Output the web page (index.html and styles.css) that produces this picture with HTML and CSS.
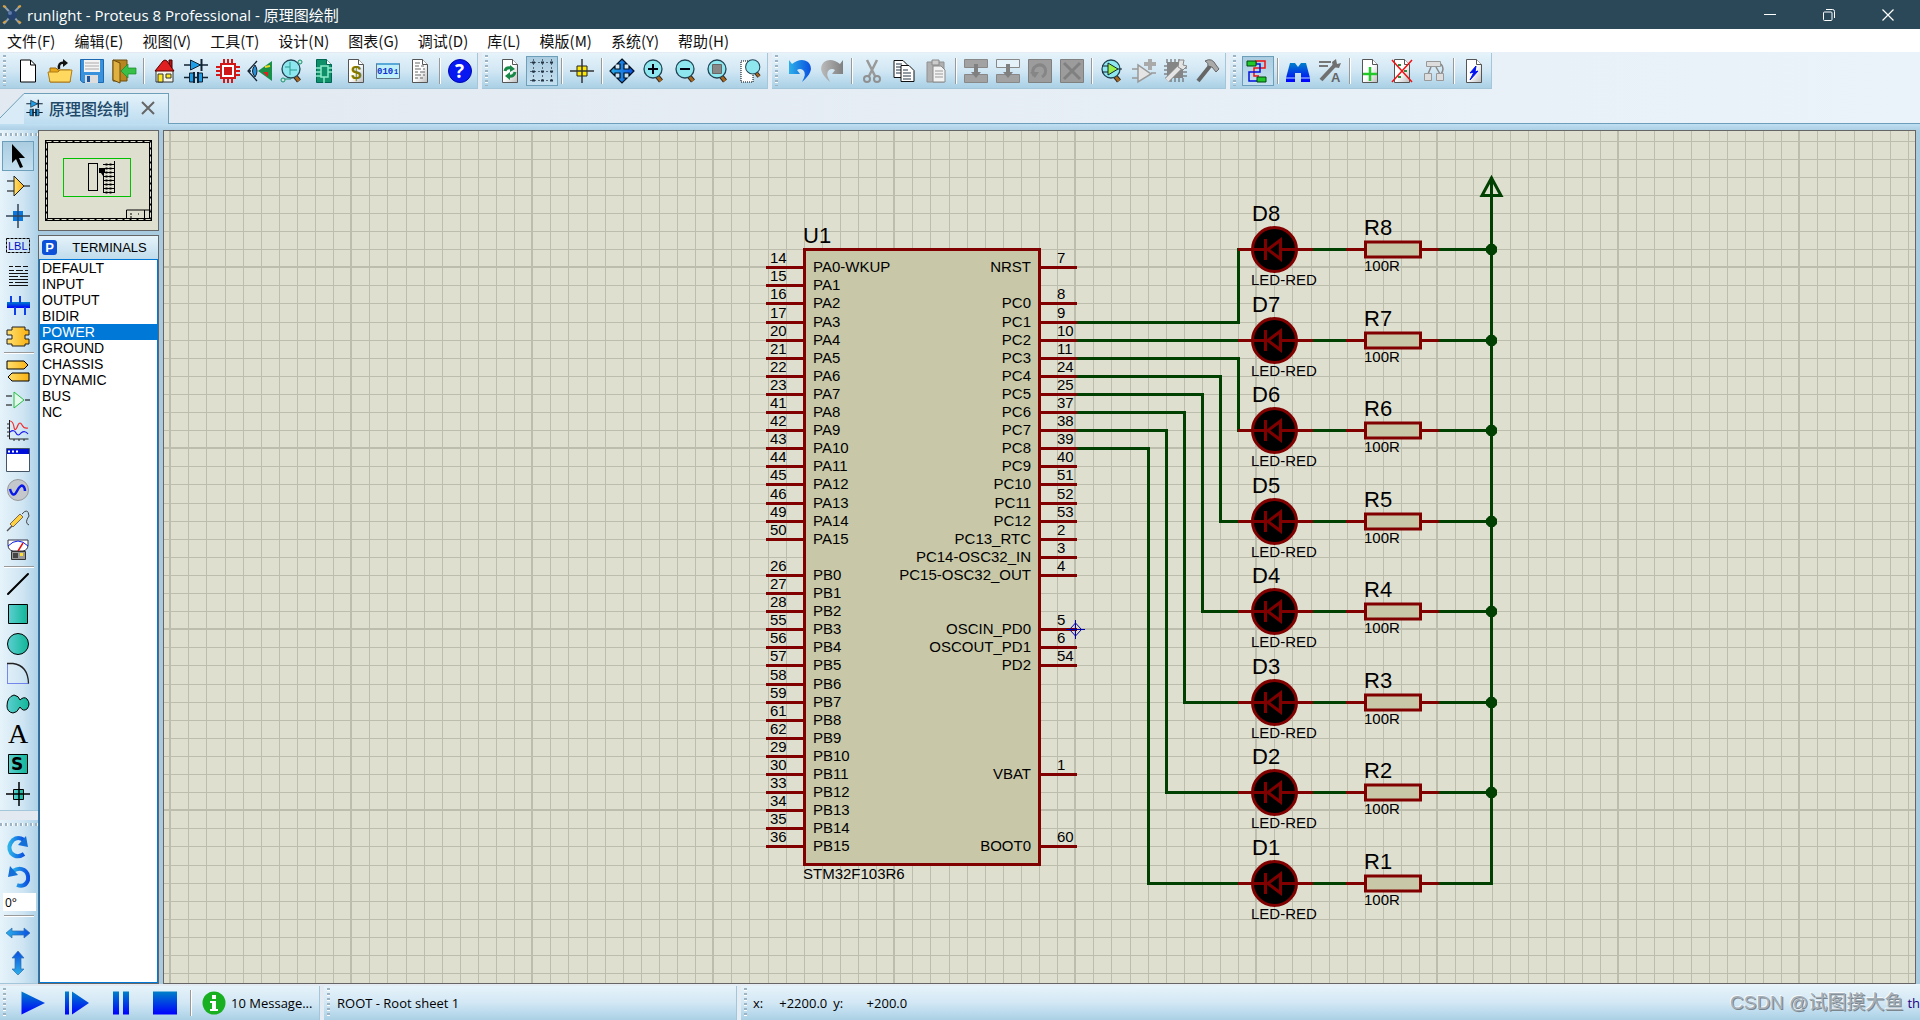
FILE: index.html
```html
<!DOCTYPE html>
<html lang="zh-CN">
<head>
    <meta charset="UTF-8">
    <meta name="viewport" content="width=device-width, initial-scale=1.0">
    <title>runlight - Proteus 8 Professional - 原理图绘制</title>
    <link rel="stylesheet" href="styles.css">
</head>
<body>
    <!-- 公用渐变和图形 -->
    <svg class="defs" width="0" height="0" aria-hidden="true">
        <defs>
            <linearGradient id="gTeal"><stop offset="0" stop-color="#5ccfd0"/><stop offset="1" stop-color="#10b698"/></linearGradient>
            <linearGradient id="gBlue" x1="0" y1="0" x2="0" y2="1"><stop offset="0" stop-color="#0080c8"/><stop offset="1" stop-color="#0000ff"/></linearGradient>
            <linearGradient id="gSky"><stop offset="0" stop-color="#2cb0e8"/><stop offset="1" stop-color="#0a4fe0"/></linearGradient>
            <linearGradient id="gSkyV" x1="0" y1="0" x2="0" y2="1"><stop offset="0" stop-color="#0a4fe0"/><stop offset="1" stop-color="#2cb0e8"/></linearGradient>
            <linearGradient id="gGold"><stop offset="0" stop-color="#ffe070"/><stop offset="1" stop-color="#f8b010"/></linearGradient>
            <linearGradient id="gPage" x1="0" y1="0" x2="1" y2="1"><stop offset="0.5" stop-color="#fff"/><stop offset="1" stop-color="#bbb"/></linearGradient>
            <linearGradient id="gGray"><stop offset="0" stop-color="#bbb"/><stop offset="1" stop-color="#808080"/></linearGradient>
            <symbol id="page" viewBox="0 0 24 24">
                <path d="M4.500 .5h10l5 5v18h-15z" fill="url(#gPage)" stroke="#555"/>
                <path d="M14.500 .5v5h5" fill="#fff" stroke="#555"/>
            </symbol>
            <symbol id="lens" viewBox="0 0 24 24">
                <path d="M15 17l4 5" stroke="#222" stroke-width="5"/>
                <path d="M15 17l4 5" stroke="#a8651c" stroke-width="3"/>
                <circle cx="11" cy="10" r="9" fill="#8ee6ee" stroke="#245" stroke-width="1.300"/>
            </symbol>
            <symbol id="schem" viewBox="0 0 24 24">
                <path d="M0 6h24M0 18.500h24" stroke="#123" stroke-width="1.500"/>
                <path d="M6.500 1v10l10-5z" fill="#1f9ee8" stroke="#123"/>
                <path d="M17.500 0v12" stroke="#123" stroke-width="2"/>
                <path d="M5.500 14h4v9h-4zM14.500 14h4v9h-4z" fill="#1f9ee8" stroke="#123"/>
                <path d="M10 13v11M14 13v11" stroke="#123" stroke-width="2"/>
            </symbol>
        </defs>
    </svg>

    <header class="title-bar">
        <svg class="app-logo" viewBox="0 0 20 20">
            <path d="M2 1Q10 9 18 19M18 1Q10 9 2 19" fill="none" stroke="#8fa0b0" stroke-width="2"/>
            <path d="M1 1l3 1M19 1l-3 1M1 18l3-2M19 18l-3-2" stroke="#d8a040" stroke-width="2"/>
            <circle cx="10" cy="10" r="5" fill="#26436f"/>
            <circle cx="8" cy="8" r="2" fill="#5f7ba8"/>
        </svg>
        <h1>runlight - Proteus 8 Professional - 原理图绘制</h1>
        <div class="window-buttons">
            <button title="最小化"><svg viewBox="0 0 12 12"><path d="M0 5.500h12" stroke="#fff"/></svg></button>
            <button title="还原"><svg viewBox="0 0 12 12"><rect x=".5" y="3" width="8.500" height="8.500" rx="1" fill="none" stroke="#fff"/><path d="M3 .5h6.500q2 0 2 2V9" fill="none" stroke="#fff"/></svg></button>
            <button title="关闭"><svg viewBox="0 0 12 12"><path d="M.5.5l11 11M11.500.5l-11 11" stroke="#fff" stroke-width="1.200"/></svg></button>
        </div>
    </header>

    <nav class="menu-bar">
        <button>文件(F)</button>
        <button>编辑(E)</button>
        <button>视图(V)</button>
        <button>工具(T)</button>
        <button>设计(N)</button>
        <button>图表(G)</button>
        <button>调试(D)</button>
        <button>库(L)</button>
        <button>模版(M)</button>
        <button>系统(Y)</button>
        <button>帮助(H)</button>
    </nav>

    <div class="toolbars">
        <div class="toolbar">
            <button title="新建"><svg viewBox="0 0 24 24"><path d="M4.500 1h10l5 5v17h-15z" fill="#fff" stroke="#000"/><path d="M14.500 1v5h5" fill="none" stroke="#000"/></svg></button>
            <button title="打开"><svg viewBox="0 0 24 24"><path d="M2 23V9h6l2 2h12v12z" fill="#e8a818" stroke="#9a6a10"/><path d="M0 13h10l2-2h12l-2 12H2z" fill="#ffd860" stroke="#b07c18"/><path d="M11 10q-1-7 5-6" fill="none" stroke="#111" stroke-width="2.500"/><path d="M15 0l5 4-5 4z" fill="#111"/></svg></button>
            <button title="保存"><svg viewBox="0 0 24 24"><path d="M.5.500h23v23H3l-2.500-2z" fill="#3a92dc" stroke="#1c68b0"/><path d="M4 1h16v12H4z" fill="#f4f4f4"/><path d="M5 4h14M5 7h14M5 10h14" stroke="#aaa"/><path d="M5 16h13v8H5z" fill="#ddd"/><path d="M7 17h3v6H7z" fill="#1c58a0"/></svg></button>
            <button title="关闭项目"><svg viewBox="0 0 24 24"><path d="M1 1h14v21H1z" fill="#b88620" stroke="#6c4c0c"/><path d="M1 1l7 3v20l-7-3z" fill="#e0b040" stroke="#6c4c0c"/><path d="M24 9h-8V5l-7 7 7 7v-4h8z" fill="#38c048" stroke="#168828" stroke-width=".7"/></svg></button>
            <span class="sep"></span>
            <button title="主页"><svg viewBox="0 0 24 24"><path d="M17 1h3v8h-3z" fill="#b01818" stroke="#400"/><path d="M4 11h17v12H4z" fill="#f4f4e8" stroke="#333"/><path d="M3 12L11 2q2-2 4 0l7 10z" fill="#e02020" stroke="#500"/><path d="M6 15h5v8H6z" fill="#ffe820" stroke="#333"/><path d="M14 15h5v4h-5z" fill="#ffe820" stroke="#333"/></svg></button>
            <button title="原理图"><svg viewBox="0 0 24 24"><use href="#schem" x="0" width="24" height="24"/></svg></button>
            <button title="PCB"><svg viewBox="0 0 24 24"><path d="M8 0v24M12 0v24M16 0v24M0 8h24M0 12h24M0 16h24" stroke="#d01818" stroke-width="2"/><path d="M5 5h14v14H5z" fill="#fff" stroke="#d01818" stroke-width="2"/><path d="M8 8h8v8H8z" fill="#d01818"/></svg></button>
            <button title="3D 查看"><svg viewBox="0 0 24 24"><path d="M9 2L0 12l9 10M0 12h3" fill="none" stroke="#123" stroke-width="1.300"/><path d="M7 6q-5 6 0 12 4-6 0-12" fill="#2a90d8" stroke="#123"/><path d="M24 2v20L10 12z" fill="#189048"/><path d="M15 13h5v5z" fill="#e02020"/><path d="M17 8l5-1" stroke="#f0d820" stroke-width="2"/></svg></button>
            <button title="Gerber"><svg viewBox="0 0 24 24"><use href="#lens" width="24" height="24"/><path d="M5 8h5V3M10 8v8M10 11h7" fill="none" stroke="#28a090"/><path d="M2 20h9" stroke="#189070"/><circle cx="3" cy="21" r="2" fill="#c8eadc" stroke="#189070"/><circle cx="20" cy="3" r="2" fill="#c8eadc" stroke="#189070"/></svg></button>
            <button title="设计浏览器"><svg viewBox="0 0 24 24"><path d="M4.500.5h10l5 5v18h-15z" fill="#109068" stroke="#065"/><path d="M14.500.500v5h5" fill="#fff" stroke="#065"/><path d="M9 7h7v11H9zM4 9h5M4 13h5M4 17h5M16 9h4M16 13h4M12 18v6" fill="none" stroke="#8ce8c8" stroke-width="1.500"/></svg></button>
            <button title="物料清单"><svg viewBox="0 0 24 24"><use href="#page" width="24" height="24"/><text x="7" y="20" class="t-dollar">$</text></svg></button>
            <button title="源代码"><svg viewBox="0 0 24 24"><path d="M.500 4.500h23v15H.5z" fill="#bff0fa" stroke="#678"/><path d="M1 5h22" stroke="#58a8d8" stroke-width="2"/><text x="1" y="15" class="t-code">010</text><text x="18" y="15" class="t-code-sm">1</text></svg></button>
            <button title="工程笔记"><svg viewBox="0 0 24 24"><use href="#page" width="24" height="24"/><path d="M7 4h5M7 7h4m2 0h3M7 10h6m2 0h2M7 13h3m2 0h5M7 16h6m2 0h2M7 19h3m2 0h3" stroke="#666"/></svg></button>
            <span class="sep"></span>
            <button title="帮助"><svg viewBox="0 0 24 24"><circle cx="12" cy="12" r="11.500" fill="#0818f0" stroke="#0008b0"/><text x="7" y="19" class="t-help">?</text></svg></button>
        </div>

        <div class="toolbar">
            <button title="刷新"><svg viewBox="0 0 24 24"><use href="#page" width="24" height="24"/><path d="M7 12q1-4 6-3M17 13q-1 5-6 4" fill="none" stroke="#188848" stroke-width="3"/><path d="M12 6l5 4-5 3zM12 13v8l-5-4z" fill="#188848"/></svg></button>
            <button class="active" title="网格"><svg viewBox="0 0 24 24"><path d="M0 3.500h24M0 12.500h24M0 21.500h24M3.500 0v24M12.500 0v24M21.500 0v24" stroke="#567" stroke-dasharray="2 2"/><path d="M2 3.500h3M11 3.500h3M20 3.500h3M2 12.500h3M11 12.500h3M20 12.500h3M2 21.500h3M11 21.500h3M20 21.500h3" stroke="#234" stroke-width="2"/></svg></button>
            <span class="sep"></span>
            <button title="原点"><svg viewBox="0 0 24 24"><path d="M7 7h10v10H7z" fill="#ffe800" stroke="#222"/><path d="M12 0v24M0 12h24" stroke="#333" stroke-width="1.500"/></svg></button>
            <span class="sep"></span>
            <button title="平移"><svg viewBox="0 0 24 24"><path d="M12 0l5 5h-3v5h5V7l5 5-5 5v-3h-5v5h3l-5 5-5-5h3v-5H5v3l-5-5 5-5v3h5V5H7z" fill="url(#gSky)" stroke="#012" stroke-width="1.200"/></svg></button>
            <button title="放大"><svg viewBox="0 0 24 24"><use href="#lens" width="24" height="24"/><path d="M6 10h10M11 5v10" stroke="#001" stroke-width="2"/></svg></button>
            <button title="缩小"><svg viewBox="0 0 24 24"><use href="#lens" width="24" height="24"/><path d="M6 10h10" stroke="#001" stroke-width="2"/></svg></button>
            <button title="全部显示"><svg viewBox="0 0 24 24"><use href="#lens" width="24" height="24"/><path d="M6.500 5.500h9v9h-9z" fill="#888" stroke="#666"/></svg></button>
            <button title="区域缩放"><svg viewBox="0 0 24 24"><path d="M3 2h12v21H3z" fill="#fff" stroke="#000" stroke-dasharray="1 1"/><use href="#lens" x="6" width="19" height="19"/></svg></button>
        </div>

        <div class="toolbar">
            <button title="撤销"><svg viewBox="0 0 24 24"><path d="M1 1l3 4Q13-2 20 3q8 8-6 20 5-9 1-12-3-2-6 0l3 4H1z" fill="url(#gSky)"/></svg></button>
            <button title="重做"><svg viewBox="0 0 24 24"><path d="M23 1l-3 4Q11-2 4 3q-8 8 6 20Q5 14 9 11q3-2 6 0l-3 4h11z" fill="url(#gGray)"/></svg></button>
            <span class="sep"></span>
            <button title="剪切"><svg viewBox="0 0 24 24"><path d="M7 1l8 16M17 1L9 17" stroke="#999" stroke-width="2.500"/><circle cx="7" cy="20" r="3" fill="none" stroke="#909090" stroke-width="2"/><circle cx="17" cy="20" r="3" fill="none" stroke="#909090" stroke-width="2"/></svg></button>
            <button title="复制"><svg viewBox="0 0 24 24"><path d="M2 1.500h9l4 4v13H2z" fill="#fff" stroke="#111"/><path d="M4 5h6M4 8h5M4 11h5M4 14h5" stroke="#234"/><path d="M9 6.500h8l5 5v11H9z" fill="#fff" stroke="#111"/><path d="M11 11h5M11 14h8M11 17h8M11 20h8" stroke="#234"/></svg></button>
            <button title="粘贴"><svg viewBox="0 0 24 24"><path d="M3 3h17v20H3z" fill="#b0b0b0" stroke="#909090"/><path d="M8 1h7v5H8z" fill="#ccc" stroke="#888"/><path d="M9 7h8l4 4v12H9z" fill="#f2f2f2" stroke="#888"/><path d="M11 12h8M11 15h8M11 18h8" stroke="#999"/></svg></button>
            <span class="sep"></span>
            <button title="块复制"><svg viewBox="0 0 24 24"><path d="M.5.500h23v8H.5zM.5 15.500h23v8H.5z" fill="#a2a2a2" stroke="#888"/><path d="M10 5h4v8h3l-5 6-5-6h3z" fill="#808080"/></svg></button>
            <button title="块移动"><svg viewBox="0 0 24 24"><path d="M.5.500h23v8H.5z" fill="#e5f1f8" stroke="#888"/><path d="M.5 15.500h23v8H.5z" fill="#a2a2a2" stroke="#888"/><path d="M10 5h4v8h3l-5 6-5-6h3z" fill="#808080"/></svg></button>
            <button title="块旋转"><svg viewBox="0 0 24 24"><path d="M.5.500h23v23H.5z" fill="#9c9c9c" stroke="#808080"/><path d="M6 17q-3-7 2-10 6-3 9 2 2 6-3 9" fill="none" stroke="#868686" stroke-width="3"/><path d="M2 13h9l-4 6z" fill="#868686"/></svg></button>
            <button title="块删除"><svg viewBox="0 0 24 24"><path d="M.5.500h23v23H.5z" fill="#9c9c9c" stroke="#808080"/><path d="M4 4l16 16M20 4L4 20" stroke="#808080" stroke-width="3"/></svg></button>
            <span class="sep"></span>
            <button title="拾取元件"><svg viewBox="0 0 24 24"><use href="#lens" width="24" height="24"/><path d="M2 7h7M2 13h7" stroke="#123"/><path d="M8 4v12l10-6z" fill="#98f048" stroke="#123"/><path d="M18 10h4" stroke="#123"/></svg></button>
            <button title="制作元件"><svg viewBox="0 0 24 24"><path d="M6 6v17l13-8zM0 10h6M0 19h6M19 14h5" fill="#e4e4e4" stroke="#999" stroke-width="1.500"/><path d="M18 0v11M12 5h12" stroke="#aaa" stroke-width="4"/></svg></button>
            <button title="封装工具"><svg viewBox="0 0 24 24"><path d="M3 0v4M7 0v4M11 0v4M15 0v4M7 19v4M11 19v4M15 19v4M19 19v4M0 7h4M0 11h4M0 15h4M19 9h4M19 13h4M19 17h4" stroke="#555"/><path d="M3 3h16v16H3z" fill="#858585"/><path d="M3 21L17 7" stroke="#888" stroke-width="6"/><path d="M3 21L17 7" stroke="#e4e4e4" stroke-width="4"/><path d="M15 1l-1 7 5 3 4-4-4-1 1-5z" fill="#e4e4e4" stroke="#888"/></svg></button>
            <button title="分解"><svg viewBox="0 0 24 24"><path d="M2 22L14 7" stroke="#666" stroke-width="4"/><path d="M9 2q7-4 11 4l3 4-3 3-4-5-4-1q1-3-3-5z" fill="#aaa" stroke="#666"/></svg></button>
        </div>

        <div class="toolbar">
            <button class="active" title="自动连线"><svg viewBox="0 0 24 24"><path d="M10 5V2h9v7H8v8h5" fill="none" stroke="#f01010" stroke-width="1.500"/><path d="M10 5h4v8H3v9h9" fill="none" stroke="#0010e0" stroke-width="1.500"/><path d="M1 2h9v5H1zM11 18h9v5h-9z" fill="#20c828" stroke="#041"/></svg></button>
            <span class="sep"></span>
            <button title="查找"><svg viewBox="0 0 24 24"><path d="M4 4h5l3 4 3-4h5l4 15v4h-9v-9H9v9H0v-4z" fill="url(#gBlue)"/><path d="M0 19h9M15 19h9" stroke="#bdf" stroke-width="1"/></svg></button>
            <button title="属性分配"><svg viewBox="0 0 24 24"><path d="M1 3h12M1 7h9" stroke="#777" stroke-width="2"/><path d="M3 21L17 6" stroke="#707070" stroke-width="4"/><path d="M15 8l-1-5 4-3 1 5 4-1-2 5z" fill="#707070"/><text x="13" y="23" class="t-prop">A</text></svg></button>
            <span class="sep"></span>
            <button title="新建图纸"><svg viewBox="0 0 24 24"><use href="#page" width="24" height="24"/><path d="M12 8v14M5 15h14" stroke="#20c828" stroke-width="2.500"/></svg></button>
            <button title="删除图纸"><svg viewBox="0 0 24 24"><use href="#page" width="24" height="24"/><path d="M8 6h3M8 18h3M14 12h3" stroke="#384" stroke-width="2"/><path d="M2 1l20 22M22 1L2 23" stroke="#f01010" stroke-width="1.500"/></svg></button>
            <button title="退出子图"><svg viewBox="0 0 24 24"><path d="M9 8L6 15M14 8l4 7M19 5q4 5 0 10" fill="none" stroke="#888" stroke-width="1.500"/><path d="M4.500 2.500h14v5h-14zM2.500 14.500h7v7h-7zM14.500 14.500h7v7h-7z" fill="#ddd" stroke="#999"/></svg></button>
            <span class="sep"></span>
            <button title="电气规则检查"><svg viewBox="0 0 24 24"><use href="#page" width="24" height="24"/><path d="M14 7l-6 7 4-1-4 8 8-9-3 1z" fill="#0010f0" stroke="#0010f0"/></svg></button>
        </div>
    </div>

    <div class="tab-strip">
        <div class="tab">
            <svg class="tab-edge" viewBox="0 0 24 31"><path d="M0 25L24 .5V31H0z" fill="#d9ebf6"/><path d="M0 25L24 .5" stroke="#6d9fba" fill="none"/></svg>
            <div class="tab-body">
                <svg class="tab-icon" viewBox="0 0 20 24"><use href="#schem" width="20" height="24"/></svg>
                <span class="tab-name">原理图绘制</span>
                <button class="tab-close" title="关闭"><svg viewBox="0 0 14 14"><path d="M1 1l12 12M13 1L1 13" stroke="#666" stroke-width="2"/></svg></button>
            </div>
        </div>
    </div>

    <main class="workspace">
        <aside class="modes">
            <div class="mode-bar">
                <button class="active" title="选择"><svg viewBox="0 0 24 24"><path d="M6 0v19l4-4 4 9 3-1-4-9h6z" fill="#000"/></svg></button>
                <button title="元件"><svg viewBox="0 0 24 24"><path d="M1 7h7M1 17h7M18 12h6" stroke="#000"/><path d="M8 2v20l10-10z" fill="url(#gGold)" stroke="#222"/></svg></button>
                <button title="节点"><svg viewBox="0 0 24 24"><path d="M7 7h10v10H7z" fill="#0878e0"/><path d="M12 0v24M0 12h24" stroke="#345" stroke-width="1.500"/></svg></button>
                <button title="标号"><svg viewBox="0 0 24 24"><path d="M.5 4.500h23v14H.5z" fill="none" stroke="#000" stroke-dasharray="3 1"/><text x="2" y="16" class="t-lbl">LBL</text></svg></button>
                <button title="文本脚本"><svg viewBox="0 0 24 24"><path d="M3 2.500h4m2 0h6m2 0h5M3 6.500h5m2 0h7m2 0h3M3 9.500h19M3 12.500h9m2 0h8M3 15.500h19M3 18.500h4m2 0h13M3 21.500h19" stroke="#111"/></svg></button>
                <button title="总线"><svg viewBox="0 0 24 24"><path d="M1 8h23v6H1z" fill="url(#gBlue)"/><path d="M5 2v7M14 2v7M9 13v8M19 13v8" stroke="#1040e8" stroke-width="2"/></svg></button>
                <button title="子电路"><svg viewBox="0 0 24 24"><path d="M6 3h13v3h4v5h-4v4h4v5h-4v2H6v-2H1v-5h5v-4H1V6h5z" fill="url(#gGold)" stroke="#222"/></svg></button>
                <span class="rule"></span>
                <button title="终端"><svg viewBox="0 0 24 24"><path d="M1 3h17l4 4-4 4H1zM23 15H6l-4 4 4 4h17z" fill="url(#gGold)" stroke="#000"/></svg></button>
                <button title="器件引脚"><svg viewBox="0 0 24 24"><path d="M0 8h6M0 17h6M19 12h5" stroke="#000"/><path d="M8 4v16l10-8z" fill="#e4f8ec" stroke="#20c040"/></svg></button>
                <button title="图表"><svg viewBox="0 0 24 24"><path d="M3.500 2v19h19M3 6H1M3 10H1M3 14H1M3 18H1M8 21v2M13 21v2M18 21v2" fill="none" stroke="#222"/><path d="M4 3q3 0 4 6t4-2q2-4 4 0t6 3" fill="none" stroke="#f03030" stroke-width="1.200"/><path d="M4 14q4-3 6 1t5 0q4-3 7 1" fill="none" stroke="#1818f0" stroke-width="1.200"/></svg></button>
                <button title="激活弹出"><svg viewBox="0 0 24 24"><path d="M.5.500h23v23H.5z" fill="#fff" stroke="#456"/><path d="M1 1h22v5H1z" fill="#0010d8"/><path d="M2 3.500h2m2 0h2m2 0h2" stroke="#fff" stroke-width="2"/></svg></button>
                <button title="信号源"><svg viewBox="0 0 24 24"><circle cx="12" cy="12" r="10.500" fill="#c4c8cc" stroke="#999"/><path d="M4 11q3 10 7 2t7-4q1 2 1 4" fill="none" stroke="#0818e8" stroke-width="2.500"/></svg></button>
                <button title="探针"><svg viewBox="0 0 24 24"><path d="M1 23l6-6" stroke="#555" stroke-width="1.500"/><path d="M4 16l10-10 3 3L7 19z" fill="#ffd040" stroke="#765"/><path d="M16 6q6-7 7 2-5 7 0 9" fill="none" stroke="#444"/></svg></button>
                <button title="虚拟仪器"><svg viewBox="0 0 24 24"><path d="M2 2h20v5q0 5-5 6H7q-5-1-5-6z" fill="#fff" stroke="#334"/><path d="M2 8q10-10 20 0" fill="none" stroke="#1020e0"/><path d="M12 13l5-8" stroke="#e01010" stroke-width="1.500"/><path d="M5.500 13.500h14v8h-14z" fill="#999" stroke="#333"/><path d="M7 15h5v5H7z" fill="#444"/><path d="M14 15h3v3h-3z" fill="#ffe030"/></svg></button>
                <span class="rule"></span>
                <button title="直线"><svg viewBox="0 0 24 24"><path d="M2 22L22 2" stroke="#000" stroke-width="2" stroke-linecap="round"/></svg></button>
                <button title="方框"><svg viewBox="0 0 24 24"><path d="M2.500 2.500h19v19h-19z" fill="url(#gTeal)" stroke="#000"/></svg></button>
                <button title="圆形"><svg viewBox="0 0 24 24"><circle cx="12" cy="12" r="10.500" fill="url(#gTeal)" stroke="#000"/></svg></button>
                <button title="圆弧"><svg viewBox="0 0 24 24"><path d="M1.500 1.500v20h21" fill="none" stroke="#1020e0" stroke-dasharray="1 1"/><path d="M1 1.500h6q15 2 15.500 20" fill="none" stroke="#222" stroke-width="1.300"/></svg></button>
                <button title="闭合路径"><svg viewBox="0 0 24 24"><path d="M8 3q5 1 6 5 4-4 7-1 4 5 0 10-4 3-7-2-3 6-7 6-6-1-6-7Q1 5 8 3z" fill="url(#gTeal)" stroke="#000"/></svg></button>
                <button title="文本"><svg viewBox="0 0 24 24"><text x="2" y="21" class="t-serif">A</text></svg></button>
                <button title="符号"><svg viewBox="0 0 24 24"><path d="M2.500 2.500h19v19h-19z" fill="url(#gTeal)" stroke="#000"/><text x="5" y="18" class="t-sym">S</text></svg></button>
                <button title="标记"><svg viewBox="0 0 24 24"><path d="M7.500 7.500h10v10h-10z" fill="url(#gTeal)" stroke="#000"/><path d="M13 0v24M0 12h24" stroke="#000" stroke-width="1.500"/></svg></button>
            </div>
            <div class="mode-bar rotate-bar">
                <button title="顺时针旋转"><svg viewBox="0 0 24 24"><path d="M18 19Q11 24 5 18 1 11 7 5q5-4 11 0" fill="none" stroke="url(#gSky)" stroke-width="4"/><path d="M20 1l2 11-10-2z" fill="#1470d8"/></svg></button>
                <button title="逆时针旋转"><svg viewBox="0 0 24 24"><path d="M11 20q8 3 11-5 1-7-4-10-5-3-11 1" fill="none" stroke="url(#gSky)" stroke-width="4"/><path d="M4 1L2 12l10-2z" fill="#1470d8"/></svg></button>
                <input class="angle" type="text" value="0°" aria-label="旋转角度">
                <span class="rule"></span>
                <button title="水平翻转"><svg viewBox="0 0 24 24"><path d="M0 12l6-5v3h12V7l6 5-6 5v-3H6v3z" fill="url(#gSky)" stroke="#3070b0" stroke-width=".7"/></svg></button>
                <button title="垂直翻转"><svg viewBox="0 0 24 24"><path d="M12 0l6 7h-3v11h3l-6 6-6-6h3V7H6z" fill="url(#gSkyV)" stroke="#3070b0" stroke-width=".7"/></svg></button>
            </div>
        </aside>

        <section class="side-panel">
            <div class="overview">
                <svg viewBox="0 0 119 99">
                    <rect x="7.500" y="10.500" width="104" height="78" fill="none" stroke="#000" stroke-width="3"/>
                    <rect x="7.500" y="10.500" width="104" height="78" fill="none" stroke="#dfdfcf" stroke-dasharray="5 2"/>
                    <path d="M87.500 88v-9h24M105.500 79v9M91 83h2M91 86h2M99 83h1" fill="none" stroke="#000"/>
                    <rect x="24.500" y="27.500" width="67" height="38" fill="none" stroke="#00c000"/>
                    <rect x="49.500" y="32.500" width="9" height="27" fill="none" stroke="#000"/>
                    <path d="M60 37h6v5h-6zM62 42h3v19h-1V45z"/>
                    <path d="M64 33.500h12M64 37.500h12M64 41.500h12M64 45.500h12M64 49.500h12M64 53.500h12M64 57.500h12M64 61.500h12M75.500 30v32" stroke="#000"/>
                    <path d="M67.500 32.500v30M71.500 32.500v30" stroke="#000" stroke-width="2" stroke-dasharray="2 2"/>
                </svg>
            </div>
            <div class="picker">
                <div class="picker-header">
                    <button class="pick-btn" title="拾取">P</button>
                    <h2>TERMINALS</h2>
                </div>
                <ul class="picker-list">
                    <li>DEFAULT</li>
                    <li>INPUT</li>
                    <li>OUTPUT</li>
                    <li>BIDIR</li>
                    <li class="selected">POWER</li>
                    <li>GROUND</li>
                    <li>CHASSIS</li>
                    <li>DYNAMIC</li>
                    <li>BUS</li>
                    <li>NC</li>
                </ul>
            </div>
        </section>

        <section class="sheet">
            <svg id="schematic">
                <defs>
                    <pattern id="grid" x="5" y="135" width="181" height="181" patternUnits="userSpaceOnUse">
                        <path class="grid-minor" d="M19.500 0v181M37.500 0v181M56.500 0v181M74.500 0v181M92.500 0v181M110.500 0v181M128.500 0v181M146.500 0v181M164.500 0v181M0 19.500h181M0 37.500h181M0 56.500h181M0 74.500h181M0 92.500h181M0 110.500h181M0 128.500h181M0 146.500h181M0 164.500h181"/>
                        <path class="grid-major" d="M1 0v181M0 1h181"/>
                    </pattern>
                </defs>
                <rect width="100%" height="100%" fill="url(#grid)"/>
                <g id="parts"></g>
            </svg>
        </section>
    </main>

    <footer class="status-bar">
        <div class="status-panel sim">
            <button title="运行"><svg viewBox="0 0 24 24"><path d="M.5.500v23L24 12z" fill="url(#gBlue)"/></svg></button>
            <button title="单步"><svg viewBox="0 0 24 24"><path d="M0 .5h4v23H0zM7 .500v23L24 12z" fill="url(#gBlue)"/></svg></button>
            <button title="暂停"><svg viewBox="0 0 24 24"><path d="M4 .5h6v23H4zM14 .5h6v23h-6z" fill="url(#gBlue)"/></svg></button>
            <button title="停止"><svg viewBox="0 0 24 24"><path d="M0 .5h24v23H0z" fill="url(#gBlue)"/></svg></button>
            <span class="sep"></span>
            <svg class="info" viewBox="0 0 24 24"><circle cx="12" cy="12" r="11.500" fill="#18b020"/><path d="M10 4h4v4h-4zM8 10h6v8h2v2H8v-2h2v-6H8z" fill="#fff"/></svg>
            <span class="messages">10 Message...</span>
        </div>
        <div class="status-panel root">ROOT - Root sheet 1</div>
        <div class="status-panel coords">
            <span>x:</span><span class="value">+2200.0</span>
            <span class="axis">y:</span><span class="value">+200.0</span>
            <span class="watermark">CSDN @试图摸大鱼</span>
            <span class="unit">th</span>
        </div>
    </footer>

    <script src="schematic.js"></script>
</body>
</html>
```

FILE: styles.css
```css
:root {
    --title: #2a4858;
    --line: #6d9fba;
    --panel-top: #e6f3fa;
    --panel-bottom: #abd0e4;
    --sheet: #dfdfcf;
    --pin: #800000;
    --wire: #004000;
    --body: #c8c8a8;
    --ui: "Open Sans", "Noto Sans CJK SC", sans-serif;
    --arial: "Liberation Sans", Arial, sans-serif;
}

* {
    box-sizing: border-box;
}

body {
    margin: 0;
    height: 100vh;
    display: flex;
    flex-direction: column;
    overflow: hidden;
    font-family: var(--ui);
    font-size: 13px;
    background: linear-gradient(90deg, #e2e9f0, #eaf2fa);
}

button {
    padding: 0;
    border: 0;
    background: none;
    font: inherit;
    color: inherit;
    display: flex;
    align-items: center;
    justify-content: center;
}

button svg {
    overflow: visible;
}

.defs {
    position: absolute;
}

/* 标题栏 */
.title-bar {
    flex: none;
    height: 29px;
    display: flex;
    align-items: center;
    background: var(--title);
    color: #fff;
}

.app-logo {
    width: 20px;
    height: 20px;
    margin: 0 5px 0 2px;
}

.title-bar h1 {
    margin: 0;
    font-size: 15px;
    font-weight: 400;
}

.window-buttons {
    display: flex;
    margin-left: auto;
    margin-right: 3px;
}

.window-buttons button {
    width: 59px;
    height: 29px;
}

.window-buttons svg {
    width: 12px;
    height: 12px;
}

/* 菜单 */
.menu-bar {
    flex: none;
    height: 23px;
    display: flex;
    gap: 19px;
    padding-left: 7px;
    background: #fff;
    font-size: 15px;
    font-family: "Noto Sans CJK SC", sans-serif;
    line-height: 25px;
    color: #111;
}

/* 工具栏 */
.toolbars {
    flex: none;
    display: flex;
    gap: 4px;
    padding-top: 1px;
}

.toolbar {
    position: relative;
    height: 36px;
    display: flex;
    align-items: center;
    padding: 0 1px 0 12px;
    border-bottom: 1px solid #a4c6da;
    border-right: 1px solid #a4c6da;
    background: linear-gradient(var(--panel-top), #d2e7f4 50%, #bddcee 75%, var(--panel-bottom));
}

.toolbar::before,
.status-panel::before {
    content: "";
    position: absolute;
    left: 3px;
    top: 2px;
    bottom: 2px;
    width: 3px;
    background: repeating-linear-gradient(#9fb4c2 0 2px, #fff 2px 3px, transparent 3px 5px);
}

.toolbar button {
    width: 32px;
    height: 30px;
}

.toolbar svg,
.mode-bar svg {
    width: 24px;
    height: 24px;
}

.toolbar .active,
.mode-bar .active {
    border: 1px solid var(--line);
    background: linear-gradient(#abcce0, #c4e0f0);
}

.sep {
    width: 2px;
    height: 26px;
    margin: 0 3px;
    border-left: 1px solid #999;
    border-right: 1px solid #fff;
}

/* 页签 */
.tab-strip {
    flex: none;
    height: 35px;
    padding-top: 4px;
    border-bottom: 1px solid var(--line);
}

.tab {
    display: flex;
    width: 169px;
    height: 31px;
}

.tab-edge {
    flex: none;
    width: 24px;
    height: 31px;
}

.tab-body {
    flex: 1;
    display: flex;
    align-items: center;
    padding-bottom: 3px;
    border-top: 1px solid var(--line);
    border-right: 1px solid var(--line);
    background: linear-gradient(#e4f2fa, #bcdcf0);
    color: #204868;
    font-size: 16px;
    font-weight: 700;
}

.tab-icon {
    width: 17px;
    height: 20px;
    margin: 0 6px 0 2px;
}

.tab-name {
    font-weight: 500;
}

.tab-close {
    margin-left: auto;
    margin-right: 13px;
}

.tab-close svg {
    width: 14px;
    height: 14px;
}

/* 工作区 */
.workspace {
    flex: 1;
    min-height: 0;
    display: flex;
    padding: 6px 4px 0 0;
    background: linear-gradient(#bfdff2, #a8cbe0 8px);
}

.modes {
    width: 38px;
    display: flex;
    flex-direction: column;
    gap: 9px;
    background: #e2e9f0;
}

.mode-bar {
    position: relative;
    padding: 11px 4px 1px 2px;
    border-bottom: 1px solid #a4c6da;
    background: linear-gradient(90deg, #e6f3fa, #cfe5f3 60%, #aed2e8);
}

.mode-bar::before {
    content: "";
    position: absolute;
    left: 0;
    right: 0;
    top: 3px;
    height: 3px;
    background: repeating-linear-gradient(90deg, #9fb4c2 0 2px, #fff 2px 3px, transparent 3px 5px);
}

.mode-bar button {
    width: 32px;
    height: 30px;
}

.rule {
    display: block;
    height: 2px;
    margin: 1px 0 1px 2px;
    border-top: 1px solid #999;
    border-bottom: 1px solid #fff;
}

.rotate-bar {
    flex: 1;
    padding-top: 12px;
}

.angle {
    display: block;
    width: 33px;
    height: 18px;
    margin: 1px 0 4px 1px;
    padding: 0 2px;
    border: 0;
    background: #fff;
    font-family: var(--ui);
    font-size: 12px;
}

.side-panel {
    width: 121px;
    display: flex;
    flex-direction: column;
    gap: 4px;
}

.overview {
    height: 101px;
    border: 1px solid #666;
    background: var(--sheet);
}

.overview svg {
    display: block;
    width: 119px;
    height: 99px;
}

.picker {
    flex: 1;
    display: flex;
    flex-direction: column;
    border: 1px solid #666;
    font-family: var(--arial);
    font-size: 14px;
}

.picker-header {
    height: 23px;
    display: flex;
    align-items: center;
    padding-left: 3px;
    background: linear-gradient(#e6f3fa, #c0dcec);
}

.picker-header h2 {
    margin: 0;
    flex: 1;
    padding: 0 6px 0 10px;
    text-align: center;
    font-size: 13px;
    font-weight: 400;
}

.pick-btn {
    width: 15px;
    height: 15px;
    border-radius: 3px;
    background: #0c50d8;
    color: #fff;
    font-size: 13px;
    font-weight: 700;
}

.picker-list {
    flex: 1;
    margin: 0;
    padding: 0;
    list-style: none;
    border: 1px solid #0078d7;
    background: #fff;
    line-height: 16px;
}

.picker-list li {
    padding-left: 2px;
}

.picker-list .selected {
    background: #0078d7;
    color: #fff;
}

/* 图纸 */
.sheet {
    flex: 1;
    min-width: 0;
    margin-left: 4px;
    border: 1px solid #666;
    background: var(--sheet);
}

#schematic {
    display: block;
    width: 100%;
    height: 100%;
    font-family: var(--arial);
    font-size: 15px;
}

.grid-minor {
    stroke: #bdbdad;
}

.grid-major {
    stroke: #bdbdad;
    stroke-width: 2;
}

.pin,
.part,
.lead {
    fill: none;
    stroke: var(--pin);
    stroke-width: 3;
}

.part {
    fill: var(--body);
}

.led {
    fill: #000;
    stroke: var(--pin);
    stroke-width: 3;
}

.diode {
    fill: #000;
    stroke: var(--pin);
    stroke-width: 3;
}

.wire {
    fill: none;
    stroke: var(--wire);
    stroke-width: 3;
}

.dot {
    fill: var(--wire);
}

.cursor {
    fill: none;
    stroke: #0000a8;
}

.ref {
    font-size: 22px;
}

.end {
    text-anchor: end;
}

/* 状态栏 */
.status-bar {
    flex: none;
    height: 36px;
    display: flex;
    gap: 4px;
    padding-top: 2px;
}

.status-panel {
    position: relative;
    display: flex;
    align-items: center;
    padding-left: 12px;
    border-right: 1px solid #a4c6da;
    background: linear-gradient(var(--panel-top), #d2e7f4 50%, #bddcee 75%, var(--panel-bottom));
}

.sim {
    width: 320px;
    padding-left: 11px;
}

.sim button {
    width: 44px;
    height: 30px;
}

.sim svg {
    width: 24px;
    height: 24px;
}

.sim .info {
    margin: 0 5px 0 7px;
}

.root {
    width: 413px;
    padding-left: 13px;
}

.coords {
    flex: 1;
    border-right: 0;
}

.coords .value {
    width: 56px;
    text-align: right;
    margin-left: 8px;
}

.coords .axis {
    margin-left: 6px;
}

.watermark {
    margin-left: auto;
    margin-right: 4px;
    padding-bottom: 6px;
    font-family: "Liberation Sans", "Noto Sans CJK SC", sans-serif;
    font-size: 19px;
    color: #a4aeb6;
    text-shadow: 1px 1px 0 #7c868e, -1px -1px 0 #f4f8fa;
}

.unit {
    color: #200080;
}

/* 图标里的字 */
.t-dollar {
    font: 700 19px var(--arial);
    fill: #807800;
}

.t-code {
    font: 700 9px "Liberation Mono", monospace;
    fill: #1030d0;
}

.t-code-sm {
    font: 700 7px "Liberation Mono", monospace;
    fill: #1030d0;
}

.t-help {
    font: 700 19px "Open Sans", sans-serif;
    fill: #fff;
}

.t-prop {
    font: 700 13px var(--arial);
    fill: #666;
}

.t-lbl {
    font: 11px var(--arial);
    fill: #0010c0;
}

.t-serif {
    font: 28px "Liberation Serif", serif;
}

.t-sym {
    font: 700 17px "DejaVu Sans", sans-serif;
}
```

FILE: schematic.js
```js
const parts = document.getElementById('parts');
const PITCH = 18.1;   // 网格间距
const TOP = 136;      // 第一个引脚的 y

const leftPins = [
    ['PA0-WKUP', 14], ['PA1', 15], ['PA2', 16], ['PA3', 17], ['PA4', 20], ['PA5', 21],
    ['PA6', 22], ['PA7', 23], ['PA8', 41], ['PA9', 42], ['PA10', 43], ['PA11', 44],
    ['PA12', 45], ['PA13', 46], ['PA14', 49], ['PA15', 50], null,
    ['PB0', 26], ['PB1', 27], ['PB2', 28], ['PB3', 55], ['PB4', 56], ['PB5', 57],
    ['PB6', 58], ['PB7', 59], ['PB8', 61], ['PB9', 62], ['PB10', 29], ['PB11', 30],
    ['PB12', 33], ['PB13', 34], ['PB14', 35], ['PB15', 36]
];

const rightPins = [
    ['NRST', 7], null, ['PC0', 8], ['PC1', 9], ['PC2', 10], ['PC3', 11], ['PC4', 24],
    ['PC5', 25], ['PC6', 37], ['PC7', 38], ['PC8', 39], ['PC9', 40], ['PC10', 51],
    ['PC11', 52], ['PC12', 53], ['PC13_RTC', 2], ['PC14-OSC32_IN', 3],
    ['PC15-OSC32_OUT', 4], null, null, ['OSCIN_PD0', 5], ['OSCOUT_PD1', 6], ['PD2', 54],
    null, null, null, null, null, ['VBAT', 1], null, null, null, ['BOOT0', 60]
];

// 每根线转弯处的 x，从 PC1 到 PC8
const bends = [1074, 1074, 1074, 1056, 1038, 1020, 1002, 984];

// 与背景网格线对齐
const pinY = n => Math.floor(TOP + n * PITCH + 0.7);
const rowY = i => pinY(i * 5 - 1);

let svg = '';

function path(cls, d) {
    svg += `<path class="${cls}" d="${d}"/>`;
}

function text(cls, x, y, value) {
    svg += `<text class="${cls}" x="${x}" y="${y}">${value}</text>`;
}

function drawChip() {
    svg += '<rect class="part" x="640.5" y="118.5" width="235" height="615"/>';
    text('ref', 639, 112, 'U1');
    text('', 639, 748, 'STM32F103R6');

    leftPins.forEach((pin, n) => {
        if (!pin) return;
        const y = pinY(n);
        path('pin', `M602 ${y + 0.5}h37`);
        text('', 606, y - 4, pin[1]);
        text('', 649, y + 5, pin[0]);
    });

    rightPins.forEach((pin, n) => {
        if (!pin) return;
        const y = pinY(n);
        path('pin', `M877 ${y + 0.5}h36`);
        text('', 893, y - 4, pin[1]);
        text('end', 867, y + 5, pin[0]);
    });
}

function drawRow(i) {
    const y = rowY(i);
    const id = 8 - i;
    const line = y + 0.5;

    path('wire', `M913 ${pinY(i + 3) + 0.5}H${bends[i] + 0.5}V${line}H1075`);
    path('wire', `M1149 ${line}h33M1275 ${line}h52`);
    path('lead', `M1074 ${line}h75M1182 ${line}h93`);

    svg += `<circle class="led" cx="1110.5" cy="${line}" r="22"/>`;
    path('lead', `M1088 ${line}h14M1118 ${line}h15`);
    path('diode', `M1101.5 ${y - 10}v21M1104 ${line}L1116.5 ${y - 9}v19z`);
    text('ref', 1088, y - 28, 'D' + id);
    text('', 1087, y + 36, 'LED-RED');

    svg += `<rect class="part" x="1201.5" y="${y - 7}" width="55" height="15"/>`;
    text('ref', 1200, y - 14, 'R' + id);
    text('', 1200, y + 22, '100R');

    if (i < 7) {
        path('dot', `M1325 ${line - 5.5}h5l3 3v5l-3 3h-5l-3 -3v-5z`);
    }
}

drawChip();
for (let i = 0; i < 8; i++) {
    drawRow(i);
}

// 电源端子
path('wire', `M1327.5 46V${rowY(7) + 2}`);
path('wire', 'M1327.5 47L1337 64.5h-19z');

// 光标
path('cursor', 'M902 498.5h19M911.5 489v19M911.5 492l6 6.5-6 6.5-6-6.5z');

parts.innerHTML = svg;
```
